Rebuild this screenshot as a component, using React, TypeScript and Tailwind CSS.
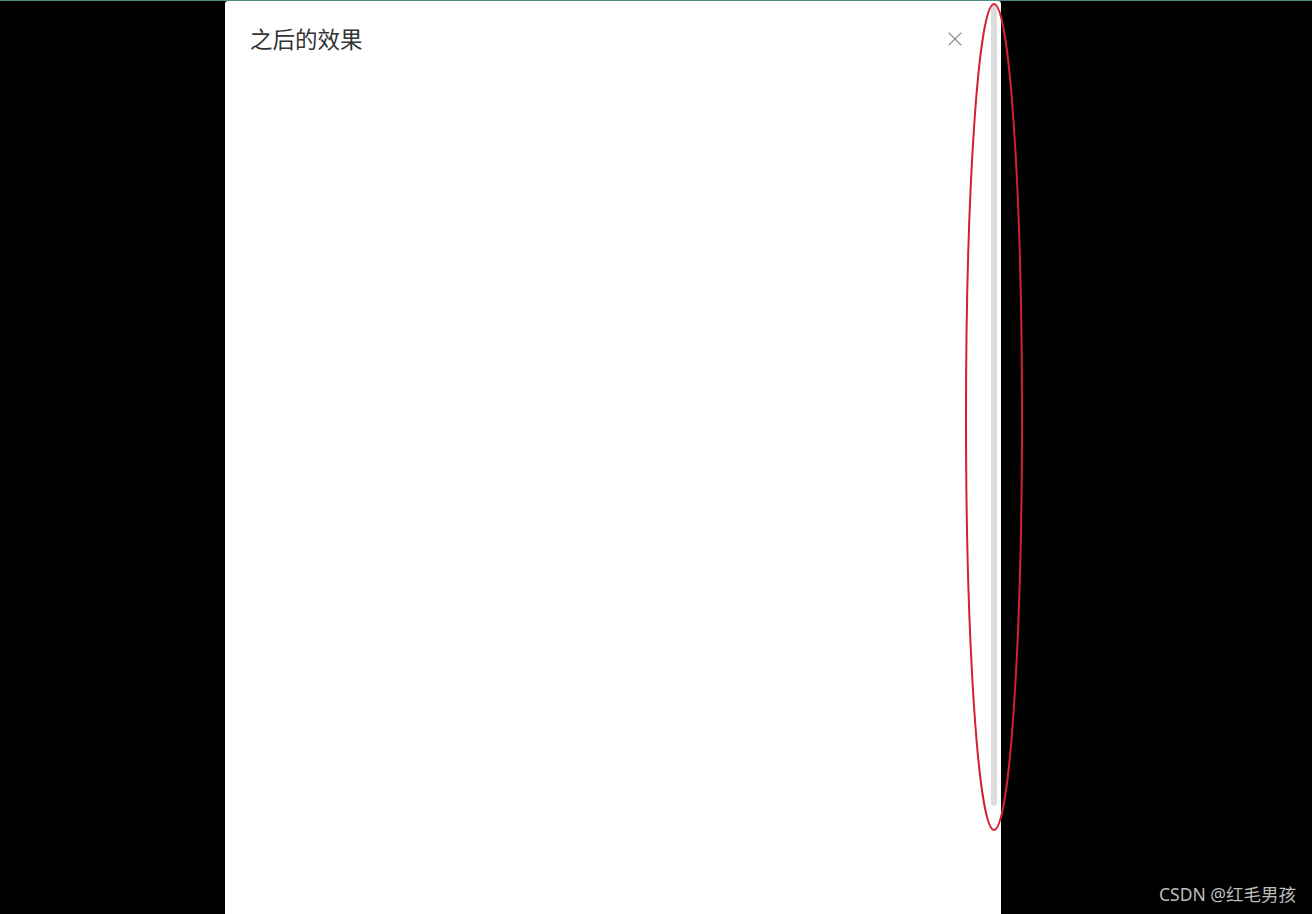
import { X } from "lucide-react";

const App = () => {
  return (
    <div
      className="relative w-[1312px] h-[914px] overflow-hidden bg-black border-t border-[#4f8c7f] flex"
      style={{ fontFamily: '"Noto Sans", "Noto Sans CJK SC", sans-serif' }}
    >
      {/* dialog */}
      <div className="ml-[225px] w-[776px] h-full bg-white rounded-t-[3px] flex">
        <div className="flex-1 pl-[25px] pr-[24px] pt-[24px]">
          <div className="flex items-center justify-between">
            <h2
              className="text-[22.5px] leading-[30px] text-[#333] -mt-[2px]"
              style={{ fontFamily: '"Noto Sans CJK SC", sans-serif' }}
            >
              之后的效果
            </h2>
            <button className="text-[#8c8c8c] w-[24px] h-[24px] shrink-0 flex items-center justify-center">
              <X size={24} strokeWidth={1.1} className="shrink-0" />
            </button>
          </div>
        </div>
        {/* scrollbar */}
        <div className="w-[6px] mr-[4px] pt-[4px]">
          <div className="h-[801px] rounded-full bg-[#dcdcdc]" />
        </div>
      </div>

      {/* annotation ellipse */}
      <svg className="absolute left-0 top-0 pointer-events-none" width="1312" height="914">
        <ellipse cx="994" cy="416" rx="28" ry="413" fill="none" stroke="#d42030" strokeWidth="2" />
      </svg>

      {/* watermark */}
      <div
        className="absolute right-[16px] bottom-[9px] text-[17.5px] leading-[22px] text-[#bdbdbd]"
        style={{ fontFamily: '"Noto Sans", "Noto Sans CJK SC", sans-serif' }}
      >
        CSDN @红毛男孩
      </div>
    </div>
  );
};

export default App;
